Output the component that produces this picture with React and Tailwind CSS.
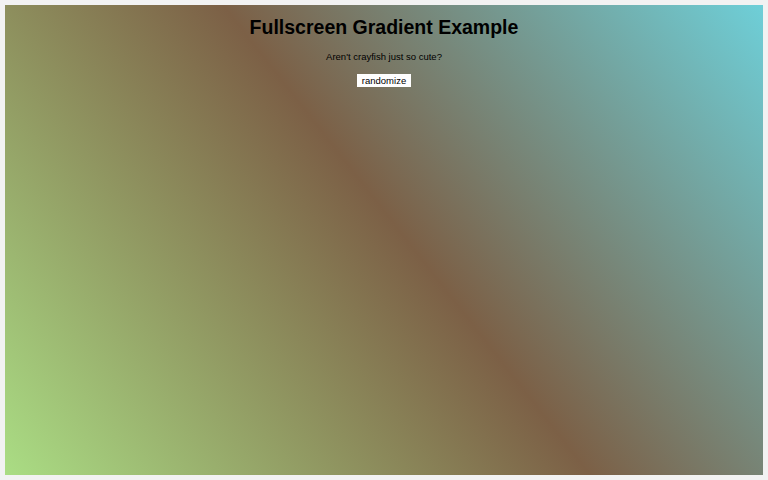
export default function App() {
  return (
    <div className="h-screen w-full bg-[#f2f2f2] p-[5px] font-['Liberation_Sans',Arial,sans-serif]">
      <div className="flex h-full w-full flex-col items-center bg-[linear-gradient(52deg,#aadd84_0%,#7c6046_52%,#6ecfd8_100%)] text-black">
        <h1 className="mt-[10px] text-[19.5px] font-bold leading-[24px]">Fullscreen Gradient Example</h1>
        <p className="mt-[12px] text-[9.5px] leading-[12px]">Aren't crayfish just so cute?</p>
        <button className="mt-[10.5px] bg-white px-[5px] text-[9.5px] leading-[13px]">randomize</button>
      </div>
    </div>
  );
}
